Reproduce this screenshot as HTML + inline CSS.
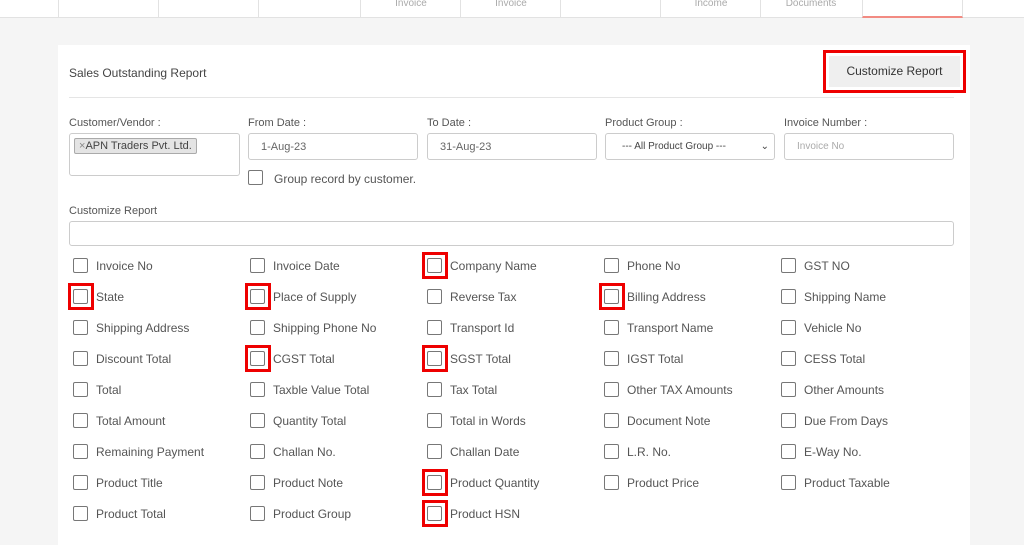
<!DOCTYPE html>
<html><head><style>
*{box-sizing:border-box;margin:0;padding:0}
body{width:1024px;height:538px;background:#f5f5f5;font-family:"Liberation Sans",sans-serif;color:#555;font-size:12px;position:relative;overflow:hidden}
.a{position:absolute}
.top{left:0;top:0;width:1024px;height:18px;background:#fff;border-bottom:1px solid #e2e2e2}
.tab{top:0;height:18px;border-left:1px solid #e2e2e2;width:101px;text-align:center;font-size:10px;color:#aaa;line-height:8px}
.card{left:58px;top:45px;width:912px;height:500px;background:#fff}
.lbl{font-size:11px;color:#555}
.inp{border:1px solid #ccc;border-radius:3px;background:#fff;font-size:11px;padding-left:12px;line-height:26px;color:#666}
.cb{width:15px;height:15px;border:1px solid #777;border-radius:2px;background:#fff}
.t{font-size:12px;color:#555}
.red{border:3px solid #e00;width:26px;height:27px}
</style></head><body>
<div class="a top"></div>
<div class="a tab" style="left:58px"></div><div class="a tab" style="left:158px"></div><div class="a tab" style="left:258px"></div>
<div class="a tab" style="left:360px">Invoice</div><div class="a tab" style="left:460px">Invoice</div><div class="a tab" style="left:560px"></div>
<div class="a tab" style="left:660px">Income</div><div class="a tab" style="left:760px">Documents</div>
<div class="a tab" style="left:862px;border-right:1px solid #e2e2e2;border-bottom:2px solid #f28b82"></div>
<div class="a card"></div>
<div class="a" style="left:69px;top:66px;font-size:12px;color:#444">Sales Outstanding Report</div>
<div class="a" style="left:823px;top:50px;width:143px;height:43px;border:3px solid #e00"></div>
<div class="a" style="left:829px;top:56px;width:131px;height:31px;background:#efefef;text-align:center;line-height:31px;font-size:12px;color:#333">Customize Report</div>
<div class="a" style="left:69px;top:97px;width:885px;height:1px;background:#e5e5e5"></div>
<div class="a lbl" style="left:69px;top:117px">Customer/Vendor :</div>
<div class="a lbl" style="left:248px;top:117px">From Date :</div>
<div class="a lbl" style="left:427px;top:117px">To Date :</div>
<div class="a lbl" style="left:605px;top:117px">Product Group :</div>
<div class="a lbl" style="left:784px;top:117px">Invoice Number :</div>
<div class="a inp" style="left:69px;top:133px;width:171px;height:43px;padding:0"></div>
<div class="a" style="left:74px;top:138px;height:16px;padding:0 4px;background:#e4e4e4;border:1px solid #aaa;border-radius:2px;font-size:11px;line-height:14px;color:#444"><span style="color:#888">×</span>APN Traders Pvt. Ltd.</div>
<div class="a inp" style="left:248px;top:133px;width:170px;height:27px">1-Aug-23</div>
<div class="a inp" style="left:427px;top:133px;width:170px;height:27px">31-Aug-23</div>
<div class="a inp" style="left:605px;top:133px;width:170px;height:27px;padding-left:16px;color:#444;font-size:10px">--- All Product Group ---<span style="position:absolute;right:5px">⌄</span></div>
<div class="a inp" style="left:784px;top:133px;width:170px;height:27px;color:#aaa;font-size:10px">Invoice No</div>
<div class="a cb" style="left:248px;top:170px"></div>
<div class="a t" style="left:274px;top:172px">Group record by customer.</div>
<div class="a lbl" style="left:69px;top:205px">Customize Report</div>
<div class="a inp" style="left:69px;top:221px;width:885px;height:25px"></div>
<div id="g"></div>
<script>
var items=[["Invoice No","Invoice Date","Company Name","Phone No","GST NO"],["State","Place of Supply","Reverse Tax","Billing Address","Shipping Name"],["Shipping Address","Shipping Phone No","Transport Id","Transport Name","Vehicle No"],["Discount Total","CGST Total","SGST Total","IGST Total","CESS Total"],["Total","Taxble Value Total","Tax Total","Other TAX Amounts","Other Amounts"],["Total Amount","Quantity Total","Total in Words","Document Note","Due From Days"],["Remaining Payment","Challan No.","Challan Date","L.R. No.","E-Way No."],["Product Title","Product Note","Product Quantity","Product Price","Product Taxable"],["Product Total","Product Group","Product HSN"]];
var red={"0,2":1,"1,0":1,"1,1":1,"1,3":1,"3,1":1,"3,2":1,"7,2":1,"8,2":1};
var h="";
items.forEach(function(r,i){r.forEach(function(s,j){var x=73+j*177,y=266+i*31;
h+='<div class="a cb" style="left:'+x+'px;top:'+(y-8)+'px"></div><div class="a t" style="left:'+(x+23)+'px;top:'+(y-7)+'px">'+s+'</div>';
if(red[i+","+j])h+='<div class="a red" style="left:'+(x-5)+'px;top:'+(y-14)+'px"></div>';});});
document.getElementById("g").innerHTML=h;
</script>
</body></html>
